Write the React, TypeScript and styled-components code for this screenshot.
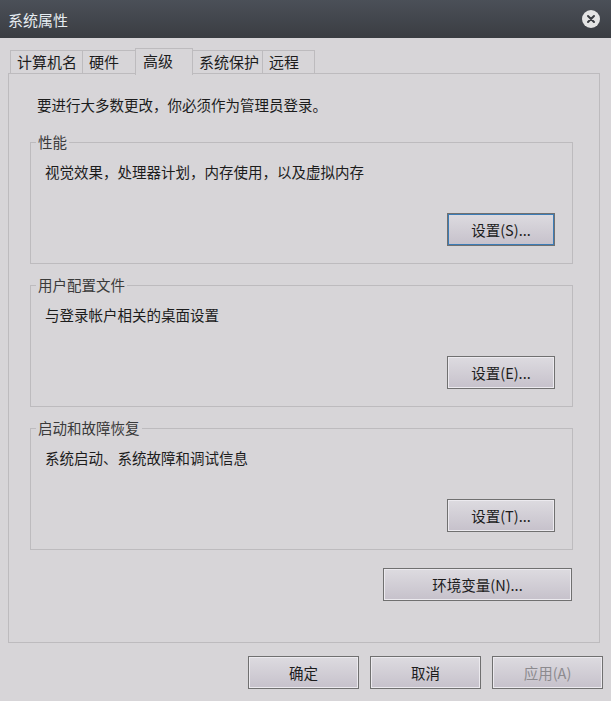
import styled, { createGlobalStyle } from 'styled-components';

const GlobalStyle = createGlobalStyle`
  html,
  body {
    margin: 0;
    padding: 0;
    background: #d7d5d8;
  }

  body {
    font-family: 'Noto Sans CJK SC', 'Noto Sans', 'Liberation Sans', sans-serif;
    color: #1c1c1c;
  }
`;

const Window = styled.div`
  width: 611px;
  height: 701px;
  display: flex;
  flex-direction: column;
  background: #d7d5d8;
  overflow: hidden;
`;

const TitleBar = styled.header`
  height: 38px;
  flex: none;
  display: flex;
  align-items: center;
  justify-content: space-between;
  padding: 0 11px 0 8px;
  background: linear-gradient(#4b5058, #3a3d42);
  color: #e6ecf1;
  font-size: 15px;
`;

const CloseButton = styled.button`
  width: 18px;
  height: 18px;
  border-radius: 50%;
  border: none;
  padding: 0;
  display: grid;
  place-items: center;
  background: #e4e4e4;
  cursor: pointer;
`;

const Body = styled.div`
  flex: 1;
  display: flex;
  flex-direction: column;
  padding: 10px 11px 0 8px;
`;

const TabRow = styled.div`
  display: flex;
  align-items: flex-end;
  height: 26px;
  padding-left: 2px;
  position: relative;
  z-index: 1;
`;

const Tab = styled.div<{ $width: number; $active?: boolean }>`
  box-sizing: border-box;
  width: ${({ $width }) => $width}px;
  height: ${({ $active }) => ($active ? 27 : 24)}px;
  margin-bottom: ${({ $active }) => ($active ? -1 : 0)}px;
  border: 1px solid #bdbbbe;
  border-bottom: ${({ $active }) => ($active ? 'none' : '1px solid #bdbbbe')};
  margin-left: -1px;
  padding-left: ${({ $active }) => ($active ? 7 : 6)}px;
  padding-top: ${({ $active }) => ($active ? 2 : 1)}px;
  font-size: 15px;
  line-height: 20px;
  color: #1c1c1c;
  background: #d7d5d8;

  &:first-child {
    margin-left: 0;
  }
`;

const Panel = styled.section`
  box-sizing: border-box;
  height: 570px;
  margin-top: -1px;
  border: 1px solid #bdbbbe;
  padding: 21px 26px 0 21px;
  display: flex;
  flex-direction: column;
`;

const Intro = styled.p`
  margin: 0 0 17px 7px;
  font-size: 14.5px;
  line-height: 20px;
`;

const Groups = styled.div`
  display: flex;
  flex-direction: column;
  gap: 11px;
`;

const Group = styled.fieldset`
  margin: 0;
  padding: 0;
  border: 1px solid #bdbbbe;
  min-width: 0;
`;

const Legend = styled.legend`
  margin-left: 5px;
  padding: 0 2px;
  font-size: 14.5px;
  line-height: 20px;
  color: #3a3a3a;
`;

const GroupBody = styled.div`
  display: flex;
  flex-direction: column;
  padding: 10px 17px 17px 14px;
`;

const GroupText = styled.p`
  margin: 0 0 31px;
  font-size: 14.5px;
  line-height: 20px;
`;

const ButtonRow = styled.div<{ $top?: number }>`
  display: flex;
  justify-content: flex-end;
  margin-top: ${({ $top }) => $top ?? 0}px;
`;

const Button = styled.button<{ $width: number; $focused?: boolean }>`
  box-sizing: border-box;
  width: ${({ $width }) => $width}px;
  height: 33px;
  padding: 0;
  border: 1px solid #707070;
  box-shadow: inset 0 0 0 1px ${({ $focused }) => ($focused ? '#3c7cb6' : '#eceaef')};
  background: linear-gradient(#dddbe0, #c6c1cb);
  font-family: inherit;
  font-size: 14.5px;
  color: ${({ disabled }) => (disabled ? '#8c8a8e' : '#1c1c1c')};
`;

const Footer = styled.div`
  display: flex;
  justify-content: flex-end;
  gap: 11px;
  padding: 13px 0 0;
  margin-right: -3px;
`;

function CloseIcon() {
  return (
    <svg width="10" height="10" viewBox="0 0 10 10">
      <path d="M2 2 L8 8 M8 2 L2 8" stroke="#3a3d42" strokeWidth="2" strokeLinecap="round" />
    </svg>
  );
}

const tabs = [
  { label: '计算机名', width: 73 },
  { label: '硬件', width: 54 },
  { label: '高级', width: 58, active: true },
  { label: '系统保护', width: 71 },
  { label: '远程', width: 53 },
];

const groups = [
  { title: '性能', text: '视觉效果，处理器计划，内存使用，以及虚拟内存', button: '设置(S)...', focused: true },
  { title: '用户配置文件', text: '与登录帐户相关的桌面设置', button: '设置(E)...' },
  { title: '启动和故障恢复', text: '系统启动、系统故障和调试信息', button: '设置(T)...' },
];

export default function App() {
  return (
    <Window>
      <GlobalStyle />
      <TitleBar>
        <span>系统属性</span>
        <CloseButton aria-label="关闭">
          <CloseIcon />
        </CloseButton>
      </TitleBar>

      <Body>
        <TabRow>
          {tabs.map((tab) => (
            <Tab key={tab.label} $width={tab.width} $active={tab.active}>
              {tab.label}
            </Tab>
          ))}
        </TabRow>

        <Panel>
          <Intro>要进行大多数更改，你必须作为管理员登录。</Intro>

          <Groups>
            {groups.map((group) => (
              <Group key={group.title}>
                <Legend>{group.title}</Legend>
                <GroupBody>
                  <GroupText>{group.text}</GroupText>
                  <ButtonRow>
                    <Button $width={108} $focused={group.focused}>
                      {group.button}
                    </Button>
                  </ButtonRow>
                </GroupBody>
              </Group>
            ))}
          </Groups>

          <ButtonRow $top={18} style={{ marginRight: 1 }}>
            <Button $width={189}>环境变量(N)...</Button>
          </ButtonRow>
        </Panel>

        <Footer>
          <Button $width={111}>确定</Button>
          <Button $width={111}>取消</Button>
          <Button $width={111} disabled>
            应用(A)
          </Button>
        </Footer>
      </Body>
    </Window>
  );
}
